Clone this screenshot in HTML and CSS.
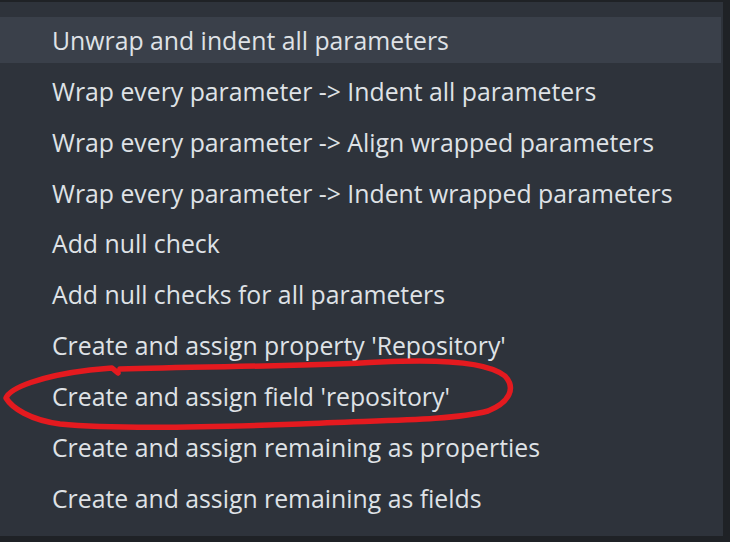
FILE: index.html
```html
<!DOCTYPE html>
<html>
<head>
<meta charset="utf-8">
<link rel="stylesheet" href="styles.css">
</head>
<body>
<div class="menu">
  <div class="item active">Unwrap and indent all parameters</div>
  <div class="item">Wrap every parameter -&gt; Indent all parameters</div>
  <div class="item">Wrap every parameter -&gt; Align wrapped parameters</div>
  <div class="item">Wrap every parameter -&gt; Indent wrapped parameters</div>
  <div class="item">Add null check</div>
  <div class="item">Add null checks for all parameters</div>
  <div class="item">Create and assign property 'Repository'</div>
  <div class="item">Create and assign field 'repository'</div>
  <div class="item">Create and assign remaining as properties</div>
  <div class="item">Create and assign remaining as fields</div>
</div>
<svg class="annotation" width="730" height="542" viewBox="0 0 730 542">
  <path d="M120 369 C 200 366, 300 367, 380 362 C 440 359, 488 362, 505 376 C 516 388, 510 402, 488 411 C 450 421, 380 420, 300 424 C 220 427, 120 430, 60 424 C 30 420, 12 408, 6 398 C 10 388, 40 376, 90 370 L 112 368 L 118 373"
        fill="none" stroke="#e41a1f" stroke-width="5.5" stroke-linecap="round" stroke-linejoin="round"/>
</svg>
</body>
</html>
```

FILE: styles.css
```css
html, body {
  margin: 0;
  padding: 0;
  background: #1f2226;
  width: 730px;
  height: 542px;
  overflow: hidden;
}

body {
  position: relative;
  font-family: "Open Sans", "Noto Sans", sans-serif;
}

.menu {
  margin-top: 2px;
  width: 723px;
  height: 534px;
  box-sizing: border-box;
  background: #2e333b;
  padding-top: 15px;
  display: flex;
  flex-direction: column;
  gap: 4.85px;
}

.item {
  height: 46px;
  margin-right: 2px;
  padding-left: 52px;
  display: flex;
  align-items: center;
  font-size: 24.8px;
  color: #dfe2e6;
  white-space: nowrap;
}

.item.active {
  background: #3a404a;
}

.annotation {
  position: absolute;
  left: 0;
  top: 0;
  pointer-events: none;
}
```
